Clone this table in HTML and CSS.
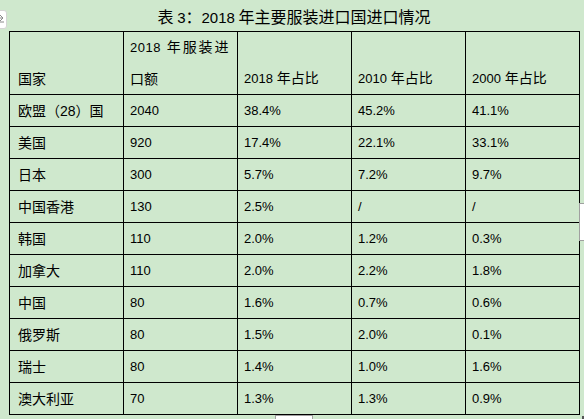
FILE: index.html
```html
<!DOCTYPE html>
<html lang="zh-CN">
<head>
  <meta charset="UTF-8">
  <title>表 3：2018 年主要服装进口国进口情况</title>
  <link rel="stylesheet" href="styles.css">
</head>
<body>
  <div class="page">
    <div class="move-handle">
      <svg width="12" height="12" viewBox="0 0 12 12"><path d="M1 4h9M7 1l3 3-3 3M11 8H2M5 5L2 8l3 3" fill="none" stroke="#888" stroke-width="1"/></svg>
    </div>

    <h1 class="caption">表 <span class="num">3</span>：<span class="num">2018</span> 年主要服装进口国进口情况</h1>

    <table class="data-table">
      <colgroup>
        <col class="col"><col class="col"><col class="col"><col class="col"><col class="col">
      </colgroup>
      <thead>
        <tr>
          <th>国家</th>
          <th><span class="spread"><span class="num">2018</span> 年服装进</span>口额</th>
          <th><span class="num">2018</span> 年占比</th>
          <th><span class="num">2010</span> 年占比</th>
          <th><span class="num">2000</span> 年占比</th>
        </tr>
      </thead>
      <tbody>
        <tr><td>欧盟（28）国</td><td>2040</td><td>38.4%</td><td>45.2%</td><td>41.1%</td></tr>
        <tr><td>美国</td><td>920</td><td>17.4%</td><td>22.1%</td><td>33.1%</td></tr>
        <tr><td>日本</td><td>300</td><td>5.7%</td><td>7.2%</td><td>9.7%</td></tr>
        <tr><td>中国香港</td><td>130</td><td>2.5%</td><td>/</td><td>/</td></tr>
        <tr><td>韩国</td><td>110</td><td>2.0%</td><td>1.2%</td><td>0.3%</td></tr>
        <tr><td>加拿大</td><td>110</td><td>2.0%</td><td>2.2%</td><td>1.8%</td></tr>
        <tr><td>中国</td><td>80</td><td>1.6%</td><td>0.7%</td><td>0.6%</td></tr>
        <tr><td>俄罗斯</td><td>80</td><td>1.5%</td><td>2.0%</td><td>0.1%</td></tr>
        <tr><td>瑞士</td><td>80</td><td>1.4%</td><td>1.0%</td><td>1.6%</td></tr>
        <tr><td>澳大利亚</td><td>70</td><td>1.3%</td><td>1.3%</td><td>0.9%</td></tr>
      </tbody>
    </table>

    <div class="side-tab"></div>
    <div class="bottom-tab"></div>
    <div class="corner"></div>
  </div>
</body>
</html>
```

FILE: styles.css
```css
html, body {
  margin: 0;
  height: 100%;
  background-color: #cfe8cd;
}

body {
  font-family: "Liberation Sans", "Noto Sans CJK SC", sans-serif;
  color: #000;
  overflow: hidden;
}

.page {
  position: relative;
  width: 584px;
  height: 419px;
  padding-left: 9px;
  box-sizing: border-box;
}

.caption {
  margin: 0;
  width: 570px;
  height: 31px;
  line-height: 32px;
  font-size: 16px;
  font-weight: normal;
  text-align: center;
  font-family: "Noto Sans CJK SC", sans-serif;
}

.caption .num {
  font-family: "Liberation Sans", sans-serif;
  font-size: 15px;
}

.data-table {
  border-collapse: collapse;
  table-layout: fixed;
  width: 570px;
}

.col {
  width: 114px;
}

.data-table th,
.data-table td {
  border: 1px solid #000;
  padding: 0 6px;
  text-align: left;
  font-weight: normal;
  white-space: nowrap;
}

.data-table th {
  vertical-align: bottom;
  line-height: 30.5px;
  font-size: 14px;
}

.data-table th .num {
  font-size: 13px;
}

.spread {
  display: block;
  width: 99px;
  text-align: justify;
  text-align-last: justify;
  letter-spacing: 0.5px;
}

.data-table td {
  line-height: 30px;
  padding-top: 1px;
  font-size: 13px;
  vertical-align: middle;
}

.data-table th:first-child,
.data-table td:first-child {
  padding-left: 8px;
  font-size: 14px;
}

.move-handle {
  position: absolute;
  left: -11px;
  top: 10px;
  width: 18px;
  height: 19px;
  background: #fff;
  border: 1px solid #d4d4d4;
  border-radius: 3px;
  display: flex;
  align-items: center;
  justify-content: flex-end;
  padding-right: 1px;
  box-sizing: border-box;
}

.side-tab {
  position: absolute;
  right: 0;
  top: 203px;
  width: 4px;
  height: 36px;
  background: #fff;
  border: 1px solid #a0a0a0;
  border-right: none;
}

.bottom-tab {
  position: absolute;
  left: 275px;
  top: 415px;
  width: 36px;
  height: 6px;
  background: #fff;
  border: 1px solid #a0a0a0;
}

.corner {
  position: absolute;
  right: 0;
  bottom: 0;
  width: 2px;
  height: 3px;
  background: #555;
}
```
